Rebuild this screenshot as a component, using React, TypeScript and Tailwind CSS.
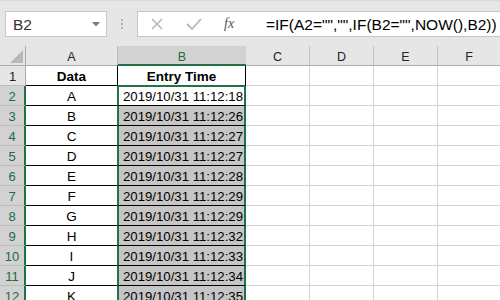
import React from 'react';

const times = [
  '11:12:18',
  '11:12:26',
  '11:12:27',
  '11:12:27',
  '11:12:28',
  '11:12:29',
  '11:12:29',
  '11:12:32',
  '11:12:33',
  '11:12:34',
  '11:12:35',
];
const letters = ['A', 'B', 'C', 'D', 'E', 'F', 'G', 'H', 'I', 'J', 'K'];

const FormulaBar = () => (
  <div className="h-[46px] bg-[#e6e6e6] border-t border-[#d9d9d9] flex items-start pt-[10px] pl-[5px]">
    {/* name box */}
    <div className="w-[102px] h-[26px] shrink-0 bg-white border border-[#c6c6c6] flex items-center pl-[7px] pr-[6px]">
      <span className="flex-1 text-[15.5px] leading-none text-[#333] pt-[1px]">B2</span>
      <svg width="8" height="5" viewBox="0 0 8 5">
        <path d="M0 0 L8 0 L4 4.5 Z" fill="#7a7a7a" />
      </svg>
    </div>
    {/* grip dots */}
    <div className="w-[30px] shrink-0 h-[26px] flex flex-col items-center justify-center gap-[2px]">
      <span className="w-[2px] h-[2px] bg-[#b3b3b3]" />
      <span className="w-[2px] h-[2px] bg-[#b3b3b3]" />
      <span className="w-[2px] h-[2px] bg-[#b3b3b3]" />
    </div>
    {/* formula box */}
    <div className="w-[380px] shrink-0 h-[26px] bg-white border border-[#c6c6c6] flex items-center">
      <div className="w-[128px] shrink-0 flex items-center">
        <svg className="ml-[13px]" width="12" height="12" viewBox="0 0 12 12">
          <path d="M1 1 L11 11 M11 1 L1 11" stroke="#b8b8b8" strokeWidth="1.6" />
        </svg>
        <svg className="ml-[23px]" width="16" height="12" viewBox="0 0 16 12">
          <path d="M1 6 L6 11 L15 1" stroke="#b8b8b8" strokeWidth="1.8" fill="none" />
        </svg>
        <span className="ml-[22px] text-[14px] italic text-[#555] font-['Liberation_Serif',serif] leading-none">
          fx
        </span>
      </div>
      <span className="text-[15.5px] leading-none text-black whitespace-nowrap pt-[1px]">
        =IF(A2="","",IF(B2="",NOW(),B2))
      </span>
    </div>
  </div>
);

const HeaderRow = () => (
  <div className="flex h-[20px] text-[12.5px] leading-[14px]">
    <div className="w-[26px] shrink-0 bg-[#e6e6e6] border-r border-b border-[#ababab] flex items-end justify-end pr-[2px] pb-[2px]">
      <svg width="13" height="13" viewBox="0 0 13 13">
        <path d="M13 0 L13 13 L0 13 Z" fill="#b8b8b8" />
      </svg>
    </div>
    <div className="w-[91px] shrink-0 bg-[#e6e6e6] border-b border-[#ababab] flex items-end justify-center pb-[1px] text-[#222]">
      A
    </div>
    <div className="w-[129px] shrink-0 bg-[#d2d2d2] border-l border-[#bdbdbd] border-b-2 border-b-[#217346] flex items-end justify-center text-[#1f6b42]">
      B
    </div>
    {['C', 'D', 'E'].map((c) => (
      <div
        key={c}
        className="w-[64px] shrink-0 bg-[#e6e6e6] border-r border-[#c4c4c4] border-b border-b-[#ababab] flex items-end justify-center pb-[1px] text-[#222]"
      >
        {c}
      </div>
    ))}
    <div className="flex-1 bg-[#e6e6e6] border-b border-[#ababab] flex items-end justify-center pb-[1px] text-[#222]">
      F
    </div>
  </div>
);

const EmptyCells = () => (
  <>
    <div className="w-[64px] shrink-0 border-r border-b border-[#d4d4d4]" />
    <div className="w-[64px] shrink-0 border-r border-b border-[#d4d4d4]" />
    <div className="w-[64px] shrink-0 border-r border-b border-[#d4d4d4]" />
    <div className="flex-1 border-b border-[#d4d4d4]" />
  </>
);

export default function App() {
  return (
    <div className="w-[500px] h-[300px] overflow-hidden bg-white font-['Liberation_Sans',Arial,sans-serif]">
      <FormulaBar />
      <HeaderRow />

      {/* row 1 */}
      <div className="flex h-[20px] text-[13.5px] leading-[16px]">
        <div className="w-[26px] shrink-0 bg-[#e6e6e6] border-r border-b border-[#bdbdbd] border-r-[#ababab] flex items-end justify-center text-[13px] text-[#222]">
          1
        </div>
        <div className="w-[91px] shrink-0 border-b border-black flex items-end justify-center font-bold">
          Data
        </div>
        <div className="w-[129px] shrink-0 border-l border-r border-black border-b border-b-[#217346] flex items-end justify-center font-bold">
          Entry Time
        </div>
        <EmptyCells />
      </div>

      {times.map((t, i) => (
        <div key={i} className="flex h-[20px] text-[13.5px] leading-[16px]">
          <div className="w-[26px] shrink-0 bg-[#d2d2d2] border-b border-[#bdbdbd] border-r-2 border-r-[#217346] flex items-end justify-center text-[13px] text-[#1f6b42]">
            {i + 2}
          </div>
          <div className="w-[91px] shrink-0 border-b border-black flex items-end justify-center">
            {letters[i]}
          </div>
          <div
            className={
              i === 0
                ? 'w-[129px] shrink-0 bg-white border-l-2 border-r-2 border-[#217346] border-t border-t-[#217346] border-b border-b-black flex items-end justify-end pr-[1px] text-[13.2px]'
                : 'w-[129px] shrink-0 bg-[#c6c6c6] border-l-2 border-r-2 border-[#217346] border-b border-b-black flex items-end justify-end pr-[1px] text-[13.2px]'
            }
          >
            2019/10/31 {t}
          </div>
          <EmptyCells />
        </div>
      ))}
    </div>
  );
}
